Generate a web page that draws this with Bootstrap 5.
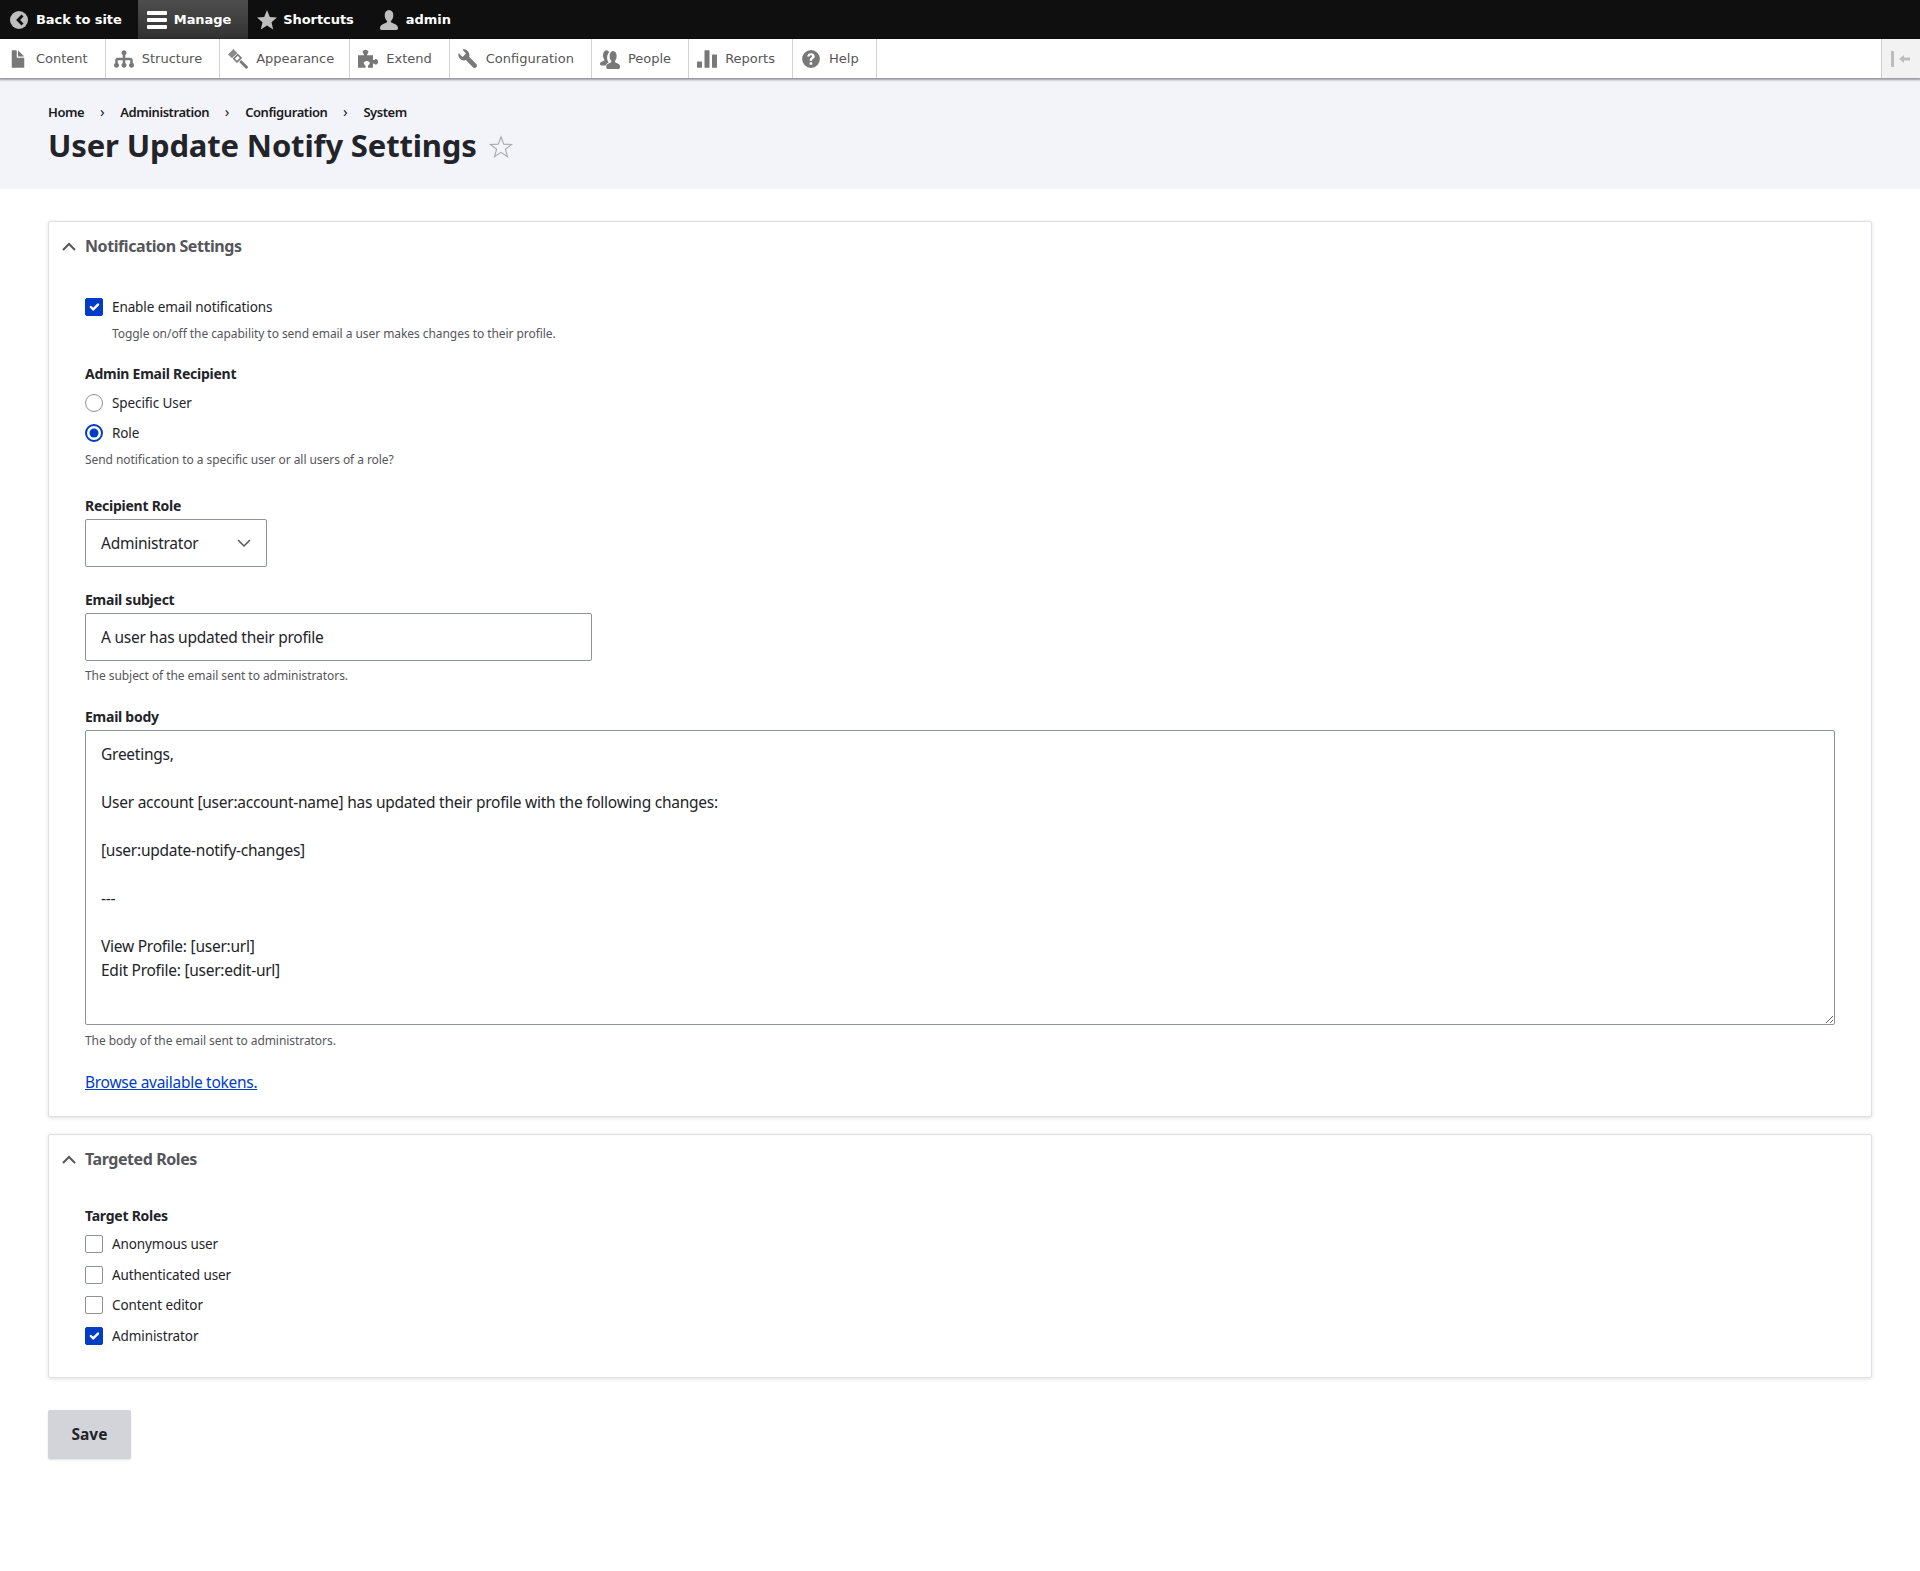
<!DOCTYPE html>
<html lang="en"><head><meta charset="utf-8"><title>User Update Notify Settings</title>
<link href="https://cdn.jsdelivr.net/npm/bootstrap@5.3.0/dist/css/bootstrap.min.css" rel="stylesheet">
<style>
body{font-family:"Noto Sans","Open Sans",sans-serif;color:#232429;background:#fff;min-height:1571px}
.topbar{height:39px;background:#0f0f0f;font:700 13px/39px "DejaVu Sans",sans-serif;letter-spacing:-.06px}
.topitem{display:flex;align-items:center;color:#fff;text-decoration:none;height:39px}
.topitem svg{flex:none}
.topitem.first{padding:0 16px 0 10px}.topitem.first svg{margin-right:8px}
.topitem.active{padding:0 17px 0 9px;background:linear-gradient(#4e4e4e,#313131)}.topitem.active svg{margin-right:7px}
.topitem.stars{padding:0 17px 0 9px}.topitem.stars svg{margin-right:6px}
.topitem.user{padding:0 0 0 9px}.topitem.user svg{margin-right:8px}
.tray{height:39px;background:#fff;box-shadow:0 1px 2px 1px rgba(0,0,0,.38);position:relative;font:400 13px/39px "DejaVu Sans",sans-serif}
.trayitem{display:flex;align-items:center;color:#565656;text-decoration:none;padding:0 17px 0 8px;border-right:1px solid #d3d3d3;height:39px}
.trayitem svg{width:20px;height:20px;margin-right:8px;flex:none}
.trayitem.narrowed{padding-right:15px}
.traytoggle{width:39px;background:#f2f2f2;border-left:1px solid #cfcfcf;height:39px}
.pagehead{background:#f3f4f9;height:111px;padding:24px 48px 0}
.crumbs{font-size:13px;font-weight:600;line-height:20px;letter-spacing:-.43px}
.crumbs .crumbsep{margin:0 14px;width:8px;text-align:center;font-weight:400;font-size:15px;line-height:18px;letter-spacing:0}
.crumbs a{color:#1b1b1d;text-decoration:none}
.pagetitle{font-size:31px;font-weight:700;line-height:40px;margin:3px 0 0;letter-spacing:-.15px;color:#232429}
.pagetitle svg{margin-left:12px;vertical-align:-2px}
.mainarea{padding:32px 48px 0}
.panel{border:1px solid #dedfe4;border-radius:2px;box-shadow:0 1px 4px rgba(0,0,0,.12);margin-bottom:17px;background:#fff}
.panelhead{height:48px;padding-left:13px;font-size:16px;font-weight:700;color:#55565b;letter-spacing:-.42px}
.panelhead svg{margin-right:9px}
.panelbody{padding:12px 36px 0}
.fieldlabel{font-size:14px;font-weight:700;line-height:18px;margin:0;letter-spacing:-.25px;color:#232429;display:block}
.hint{font-size:12px;line-height:16px;color:#55565b;letter-spacing:-.06px;margin:0}
.choice{display:flex;align-items:center;min-height:18px;padding:0;margin:0}
.choice .form-check-input{width:18px;height:18px;margin:0 9px 0 0;border:1px solid #8e929c;flex:none;float:none}
.choice .form-check-input[type=checkbox]{border-radius:2px}
.choice .form-check-input[type=checkbox]:checked{background-color:#003cc5;border-color:#003cc5}
.choice .form-check-input[type=radio]:checked{background-color:#fff;border:2px solid #003cc5;background-size:100% 100%;background-image:url("data:image/svg+xml,%3csvg xmlns='http://www.w3.org/2000/svg' viewBox='0 0 14 14'%3e%3ccircle cx='7' cy='7' r='4.500' fill='%23003cc5'/%3e%3c/svg%3e")}
.choice .form-check-label{font-size:13.5px;line-height:18px;letter-spacing:-.1px;color:#232429}
.fieldctl{border:1px solid #8e929c;border-radius:2px;height:48px;font-size:15.5px;color:#232429;padding:0 15px;letter-spacing:-.25px;box-shadow:none}
.selectctl{width:182px;padding-top:1px;background-image:url("data:image/svg+xml,%3csvg xmlns='http://www.w3.org/2000/svg' viewBox='0 0 14 9'%3e%3cpath fill='none' stroke='%2355565b' stroke-width='1.500' d='M1 1l6 6 6-6'/%3e%3c/svg%3e");background-size:14px 9px;background-position:right 15px center;background-repeat:no-repeat}
.subjectctl{width:507px}
.bodyctl{height:295px;width:100%;padding:11px 15px;line-height:24px;font-size:15.5px;color:#232429;border:1px solid #8e929c;border-radius:2px;letter-spacing:-.25px;box-shadow:none}
.tokenlink{font-size:15.5px;line-height:20px;color:#003cc5;letter-spacing:-.28px}
.savebtn{width:83px;height:49px;background:#d3d4d9;border:0;border-radius:2px;font-size:15.5px;font-weight:700;color:#232429;padding:0;margin-top:15px;box-shadow:0 1px 2px rgba(0,0,0,.12)}
.savebtn:hover{background:#d3d4d9;color:#232429}
.recessed{margin:10px 0 0 27px}
.legendrow{margin-top:23px}
.radio1{margin-top:10.5px}.radio2{margin-top:12px}
.radiohint{margin-top:10.5px}
.rolelabel{margin-top:29px;margin-bottom:4px}
.subjlabel{margin-top:24px;margin-bottom:4px}
.subjhint{margin-top:7px}
.bodylabel{margin-top:24px;margin-bottom:4px}
.bodyhint{margin-top:8px}
.linkrow{margin:23px 0 0;line-height:20px;padding-bottom:24px}
.targetlabel{margin-top:12px}
.t1{margin-top:10px}.t2{margin-top:12.67px}
.tlast{padding-bottom:32px;align-items:flex-start}
</style></head><body>
<nav class="topbar d-flex" aria-label="Toolbar">
 <a class="topitem first" href="#"><svg width="18" height="18" viewBox="0 0 18 18"><circle cx="9" cy="9" r="9" fill="#bebebe"/><path d="M11.5 3.6l2 2-3.400 3.400 3.400 3.400-2 2L6.100 9z" fill="#0f0f0f"/></svg>Back to site</a>
 <a class="topitem active" href="#"><svg width="20" height="20" viewBox="0 0 20 20"><g fill="#fff"><rect x="0" y="1" width="20" height="4" rx="1"/><rect x="0" y="8" width="20" height="4" rx="1"/><rect x="0" y="15" width="20" height="4" rx="1"/></g></svg>Manage</a>
 <a class="topitem stars" href="#"><svg width="20" height="20" viewBox="0 0 20 20"><path d="M10 0l2.800 6.900 7.200.6-5.500 4.700 1.700 7.300L10 15.400l-6.200 4.100 1.700-7.300L0 7.500l7.200-.6z" fill="#bebebe"/></svg>Shortcuts</a>
 <a class="topitem user" href="#"><svg width="18" height="20" viewBox="0 0 18 20"><path d="M9 0c2.700 0 4.300 2.100 4.300 5.200 0 2.300-.9 4.500-2.100 5.600-.6.6-.5 1.500.2 1.800 2.800 1.300 6.600 2.300 6.600 5.400 0 1-.5 2-1.500 2H1.500c-1 0-1.500-1-1.500-2 0-3.100 3.800-4.100 6.600-5.400.7-.3.8-1.200.2-1.800C5.600 9.700 4.700 7.500 4.700 5.200 4.700 2.100 6.300 0 9 0z" fill="#bebebe"/></svg>admin</a>
</nav>
<nav class="tray d-flex justify-content-between" aria-label="Administration menu">
 <div class="d-flex">
  <a class="trayitem" href="#"><svg viewBox="0 0 16 16"><path fill="#787878" d="M12.502 7h-5c-.276 0-.502-.225-.502-.5v-5c0-.275-.225-.5-.5-.5h-3c-.275 0-.5.225-.5.5v13c0 .275.225.5.5.5h9.002c.275 0 .498-.225.498-.5v-7c0-.275-.225-.5-.498-.5zM8.502 6h4c.275 0 .34-.159.146-.354l-4.293-4.292c-.195-.195-.353-.129-.353.146v4c0 .275.225.5.5.5z"/></svg>Content</a>
  <a class="trayitem" href="#"><svg viewBox="0 0 16 16"><path fill="#787878" d="M15.002 11.277v-2.277c0-1.103-.896-2-2-2h-4v-2.277c.596-.347 1-.984 1-1.723 0-1.104-.895-2-2-2-1.103 0-2 .896-2 2 0 .738.405 1.376 1 1.723v2.277h-4c-1.103 0-2 .897-2 2v2.277c-.595.347-1 .984-1 1.723 0 1.104.897 2 2 2 1.105 0 2-.896 2-2 0-.738-.404-1.376-1-1.723v-2.277h4v2.277c-.595.347-1 .984-1 1.723 0 1.104.897 2 2 2 1.105 0 2-.896 2-2 0-.738-.404-1.376-1-1.723v-2.277h4v2.277c-.596.347-1 .984-1 1.723 0 1.104.896 2 2 2 1.105 0 2-.896 2-2 0-.739-.404-1.376-1-1.723z"/></svg>Structure</a>
  <a class="trayitem narrowed" href="#"><svg viewBox="0 0 16 16"><path fill="#8a8a8a" d="M0 4.300L4.300 0l3.200 3.100-4.300 4.300z"/><path fill="#787878" fill-rule="evenodd" d="M3.700 7.700L7.800 3.600l3.500 3.500-4.100 4.100zM5.500 7.700L7.200 9.400l2.300-2.300-1.700-1.700z"/><path fill="#787878" d="M9 10.300l1.500-1.500 5.100 4.900c.5.500.5 1.200 0 1.700-.5.500-1.200.5-1.700 0z"/></svg>Appearance</a>
  <a class="trayitem" href="#"><svg viewBox="0 0 16 16"><path fill="#787878" d="M0 5h4.200c.6 0 .8-.5.4-.9C4 3.500 3.700 3 3.700 2.400 3.700 1.300 4.700.5 6 .5s2.300.8 2.300 1.900c0 .6-.3 1.100-.9 1.700-.4.4-.2.9.4.9H12v3.300c0 .5.5.7.900.4.500-.5 1-.7 1.500-.7 1 0 1.600 1 1.600 2.200s-.6 2.200-1.600 2.200c-.5 0-1-.2-1.500-.7-.4-.3-.9-.1-.9.4V15H8v-1.500c0-.6.5-.8.900-1.200.4-.4.5-.8.5-1.100 0-.9-1.100-1.700-2.400-1.700s-2.400.8-2.400 1.700c0 .3.100.7.500 1.100.4.400.9.600.9 1.200V15H0z"/></svg>Extend</a>
  <a class="trayitem" href="#"><svg viewBox="0.6 0.6 15 15"><path fill="#787878" d="M14.300 11.800L8.900 6.500c.3-.7.400-1.600.1-2.600C8.400 2 6.300.6 4.300.9c-.3 0-.4.3-.2.5l2.300 2.300c.1.100.1.300 0 .4L4.200 6.400c-.1.100-.3.100-.4 0L1.400 4c-.2-.2-.5-.1-.5.200-.3 2.100 1 4.200 3 4.800 1 .3 1.900.2 2.600-.1l5.300 5.400c.7.700 1.800.7 2.500 0 .7-.7.700-1.800 0-2.500z"/></svg>Configuration</a>
  <a class="trayitem" href="#"><svg viewBox="0 2.200 16 13.800" preserveAspectRatio="none"><path fill="#787878" d="M1.200 13.500c-.7 0-1.200-.4-1.200-1 0-.3.100-1 .9-1.300l2.400-1c.3-.1.300-.5.100-.7-.7-.8-1-1.900-1-3 0-1.800 1-3.500 2.700-3.500 1 0 1.800.6 2.300 1.400-1.100.9-1.700 2.300-1.700 3.700 0 1.300.4 2.500 1.100 3.400-.9.400-1.600.9-2.100 1.700l-.2.300z"/><path fill="#787878" d="M10.500 3.600c1.800 0 2.800 1.500 2.800 3.400 0 1.300-.5 2.500-1.200 3.300-.3.400-.2 1 .3 1.200l2.500 1.100c.9.400 1.100 1.200 1.100 2 0 .9-.6 1.400-1.300 1.400H6.300c-.7 0-1.300-.5-1.300-1.400 0-.8.2-1.600 1.100-2l2.500-1.100c.5-.2.600-.8.300-1.200-.7-.8-1.200-2-1.200-3.300 0-1.900 1-3.400 2.800-3.400z"/></svg>People</a>
  <a class="trayitem" href="#"><svg viewBox="0 0 16 16"><g fill="#787878"><rect x="0" y="10" width="4" height="5" rx=".5"/><rect x="6" y="1" width="4" height="14" rx=".5"/><rect x="12" y="4.400" width="4" height="10.600" rx=".5"/></g></svg>Reports</a>
  <a class="trayitem" href="#"><svg viewBox="-1 -1 18 18"><path fill="#787878" fill-rule="evenodd" d="M8 0a8 8 0 1 1 0 16A8 8 0 0 1 8 0zM6.800 11v2.200h2.300V11zM8 2.800C6.100 2.800 4.700 3.900 4.600 5.700h2.200c.1-.7.500-1 1.100-1 .6 0 1 .3 1 .9 0 .5-.2.700-.9 1.200-.9.600-1.200 1.200-1.200 2.400v.3h2.200v-.3c0-.6.200-.8.800-1.200.9-.6 1.500-1.300 1.500-2.500 0-1.700-1.500-2.700-3.300-2.700z"/></svg>Help</a>
 </div>
 <div class="traytoggle d-flex align-items-center justify-content-center" aria-label="Collapse"><svg width="20" height="16" viewBox="0 0 20 16"><rect x="0" y="0" width="3" height="16" rx=".5" fill="#bdbdbd"/><path d="M8 8l5-4v2.500h6v3h-6V12z" fill="#bdbdbd"/></svg></div>
</nav>
<header class="pagehead">
 <nav class="crumbs d-flex" aria-label="Breadcrumb"><a href="#">Home</a><span class="crumbsep">›</span><a href="#">Administration</a><span class="crumbsep">›</span><a href="#">Configuration</a><span class="crumbsep">›</span><a href="#">System</a></nav>
 <h1 class="pagetitle">User Update Notify Settings<svg width="24" height="24" viewBox="0 0 24 24"><path d="M12 1.800l2.700 7.300 7.800.3-6.100 4.800 2.100 7.500-6.500-4.300-6.500 4.300 2.100-7.500-6.100-4.800 7.800-.3z" fill="none" stroke="#a8a9ae" stroke-width="1.100"/></svg></h1>
</header>
<main class="mainarea">
 <section class="panel">
  <div class="panelhead d-flex align-items-center"><svg width="14" height="9" viewBox="0 0 14 9"><path d="M1 8l6-6 6 6" fill="none" stroke="#55565b" stroke-width="2"/></svg>Notification Settings</div>
  <div class="panelbody">
   <div class="choice mt-3"><input class="form-check-input" type="checkbox" id="c1" checked><label class="form-check-label" for="c1">Enable email notifications</label></div>
   <p class="hint recessed">Toggle on/off the capability to send email a user makes changes to their profile.</p>
   <div class="fieldlabel legendrow">Admin Email Recipient</div>
   <div class="choice radio1"><input class="form-check-input" type="radio" name="r" id="r1"><label class="form-check-label" for="r1">Specific User</label></div>
   <div class="choice radio2"><input class="form-check-input" type="radio" name="r" id="r2" checked><label class="form-check-label" for="r2">Role</label></div>
   <p class="hint radiohint">Send notification to a specific user or all users of a role?</p>
   <label class="fieldlabel rolelabel" for="s1">Recipient Role</label>
   <select class="form-select fieldctl selectctl" id="s1"><option>Administrator</option></select>
   <label class="fieldlabel subjlabel" for="i1">Email subject</label>
   <input class="form-control fieldctl subjectctl" id="i1" value="A user has updated their profile">
   <p class="hint subjhint">The subject of the email sent to administrators.</p>
   <label class="fieldlabel bodylabel" for="t1">Email body</label>
   <textarea class="form-control bodyctl" id="t1">Greetings,

User account [user:account-name] has updated their profile with the following changes:

[user:update-notify-changes]

---

View Profile: [user:url]
Edit Profile: [user:edit-url]</textarea>
   <p class="hint bodyhint">The body of the email sent to administrators.</p>
   <p class="linkrow"><a class="tokenlink" href="#">Browse available tokens.</a></p>
  </div>
 </section>
 <section class="panel">
  <div class="panelhead d-flex align-items-center"><svg width="14" height="9" viewBox="0 0 14 9"><path d="M1 8l6-6 6 6" fill="none" stroke="#55565b" stroke-width="2"/></svg>Targeted Roles</div>
  <div class="panelbody">
   <div class="fieldlabel targetlabel">Target Roles</div>
   <div class="choice t1"><input class="form-check-input" type="checkbox" id="a1"><label class="form-check-label" for="a1">Anonymous user</label></div>
   <div class="choice t2"><input class="form-check-input" type="checkbox" id="a2"><label class="form-check-label" for="a2">Authenticated user</label></div>
   <div class="choice t2"><input class="form-check-input" type="checkbox" id="a3"><label class="form-check-label" for="a3">Content editor</label></div>
   <div class="choice t2 tlast"><input class="form-check-input" type="checkbox" id="a4" checked><label class="form-check-label" for="a4">Administrator</label></div>
  </div>
 </section>
 <button class="btn savebtn" type="button">Save</button>
</main>
</body></html>
